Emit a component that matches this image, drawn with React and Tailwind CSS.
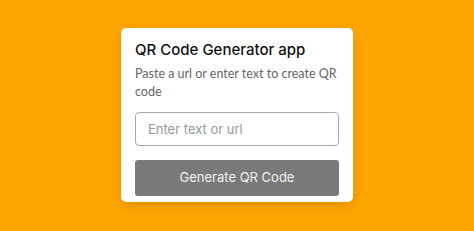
export default function App() {
  return (
    <div
      className="w-[474px] h-[231px] bg-[#ffa500] flex justify-center pt-[28px]"
      style={{ fontFamily: "Inter, 'Open Sans', sans-serif" }}
    >
      <div className="w-[232px] h-[174px] bg-white rounded-[5px] shadow-[0_4px_12px_rgba(0,0,0,0.12)] px-[14px] pt-[12px]">
        <h1 className="text-[15px] font-medium text-[#111] leading-[20px]">
          QR Code Generator app
        </h1>
        <p className="mt-[5px] text-[12.5px] leading-[18px] text-[#666] font-['Lato',sans-serif]">
          Paste a url or enter text to create QR code
        </p>
        <input
          type="text"
          placeholder="Enter text or url"
          className="mt-[11px] w-[204px] h-[34px] border border-[#aaa] rounded-[4px] px-[12px] text-[13px] outline-none placeholder:text-[#999]"
        />
        <button className="mt-[14px] w-[204px] h-[36px] bg-[#7a7a7a] rounded-[3px] text-[13px] text-[#f2f2f2]">
          Generate QR Code
        </button>
      </div>
    </div>
  );
}
